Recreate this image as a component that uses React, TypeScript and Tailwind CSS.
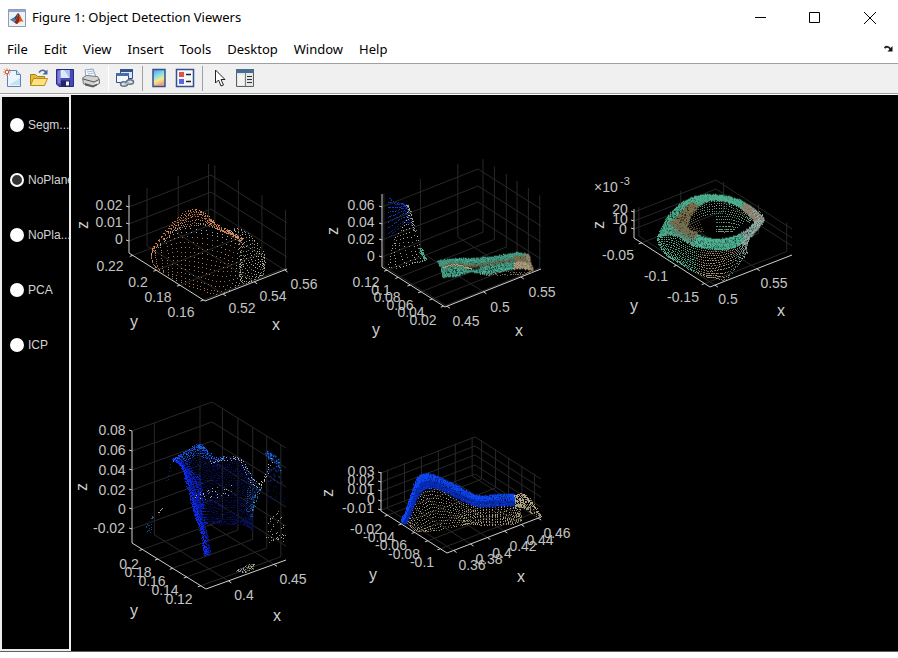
import React, { useState } from 'react';

type Pt = [number, number];

type Patch = {
  rows: Pt[][];
  nu: number;
  nv: number;
  dot?: number;
  jitter?: number;
  color: (u: number, v: number, r: number) => string;
};

type Label = { text: string; x: number; y: number };

type Plot = {
  name: string;
  view: string;
  left: Pt;
  front: Pt;
  right: Pt;
  top: number;
  xTicks: number[];
  yTicks: number[];
  zTicks: number[];
  labels: Label[];
  axes: { x: Pt; y: Pt; z: Pt };
  exponent?: Pt;
  cloudOrigin: Pt;
  cloud: Patch[];
};

// Small deterministic noise so every render draws the same points
const noise = (n: number) => {
  const s = Math.sin(n * 127.1 + 11.7) * 43758.5453;
  return s - Math.floor(s);
};

const spline = (p: Pt[], t: number): Pt => {
  if (p.length === 1) return p[0];
  const s = Math.min(t * (p.length - 1), p.length - 1.0001);
  const i = Math.floor(s);
  const f = s - i;
  const a = p[Math.max(i - 1, 0)];
  const b = p[i];
  const c = p[i + 1];
  const d = p[Math.min(i + 2, p.length - 1)];
  const mix = (k: 0 | 1) =>
    0.5 *
    (2 * b[k] +
      (c[k] - a[k]) * f +
      (2 * a[k] - 5 * b[k] + 4 * c[k] - d[k]) * f * f +
      (3 * b[k] - a[k] - 3 * c[k] + d[k]) * f * f * f);
  return [mix(0), mix(1)];
};

// Cloud units are a third of a pixel, so multiples of 3 keep the dots crisp
const snap = (n: number) => Math.round(n / 3) * 3;

const scatter = (patch: Patch) => {
  const groups: Record<string, string> = {};
  const j = patch.jitter ?? 2;
  for (let a = 0; a < patch.nv; a++) {
    for (let b = 0; b < patch.nu; b++) {
      const v = patch.nv === 1 ? 0 : a / (patch.nv - 1);
      const u = patch.nu === 1 ? 0 : b / (patch.nu - 1);
      const n = a * 311 + b * 7;
      const column = patch.rows.map(row => spline(row, u));
      const [x, y] = spline(column, v);
      const c = patch.color(u, v, noise(n + 3));
      if (c === 'none') continue;
      const px = snap(x + (noise(n) - 0.5) * j);
      const py = snap(y + (noise(n + 1) - 0.5) * j) + 1.5;
      groups[c] = (groups[c] ?? '') + `M${px} ${py}h${patch.dot ?? 3}`;
    }
  }
  return groups;
};

const list = (texts: string[], at: Pt[]): Label[] =>
  texts.map((text, i) => ({ text, x: at[i][0], y: at[i][1] }));

const plots: Plot[] = [
  {
    name: 'Segment 1',
    view: '75 150 250 200',
    left: [129, 253],
    front: [205, 301],
    right: [287, 269],
    top: 195,
    zTicks: [207, 224, 241],
    yTicks: [0.05, 0.36, 0.67, 0.98],
    xTicks: [0.22, 0.6, 0.97],
    labels: list(
      ['0.02', '0.01', '0', '0.22', '0.2', '0.18', '0.16', '0.52', '0.54', '0.56'],
      [[109, 205], [109, 222], [119, 239], [110, 266], [138, 282], [158, 297], [181, 312], [242, 308], [273, 296], [304, 284]],
    ),
    axes: { x: [276, 325], y: [134, 323], z: [84, 225] },
    cloudOrigin: [70, 150],
    cloud: [
      {
        rows: [
          [[246, 292], [280, 250], [312, 212], [345, 185], [380, 178], [410, 195], [440, 222], [475, 240]],
          [[246, 300], [285, 252], [325, 218], [355, 200], [385, 195], [410, 210], [440, 235], [480, 246]],
          [[246, 308], [290, 262], [320, 236], [350, 228], [385, 224], [420, 228], [460, 244], [510, 262]],
        ],
        nu: 36, nv: 8, jitter: 4,
        color: (u, v, r) => (v > 0.85 && r > 0.4 ? '#a59684' : r > 0.6 ? '#e08b56' : '#b96d42'),
      },
      {
        rows: [
          [[244, 310], [290, 258], [330, 236], [385, 238], [440, 248], [490, 266], [520, 280]],
          [[244, 322], [300, 300], [345, 296], [390, 300], [440, 308], [480, 322], [520, 334]],
          [[248, 340], [300, 348], [345, 352], [390, 360], [430, 370], [475, 372], [515, 370]],
          [[258, 352], [300, 380], [345, 402], [385, 415], [420, 428], [455, 430], [505, 404]],
        ],
        nu: 22, nv: 14, jitter: 1,
        color: (u, v, r) => (u > 0.88 ? '#a0967f' : v < 0.08 ? '#b4ada0' : r > 0.6 ? '#c98457' : '#a06a48'),
      },
      {
        rows: [
          [[468, 240], [500, 234], [530, 246], [556, 272], [578, 305], [583, 325]],
          [[480, 250], [505, 250], [535, 272], [555, 300], [573, 325], [583, 340]],
          [[500, 262], [520, 290], [536, 318], [550, 335], [568, 348], [582, 355]],
          [[508, 300], [512, 330], [516, 350], [530, 366], [550, 375], [578, 370]],
          [[508, 340], [508, 370], [512, 390], [522, 400], [545, 392], [570, 376]],
        ],
        nu: 15, nv: 15, jitter: 2,
        color: (u, v, r) => (r > 0.65 ? '#c4bba4' : r > 0.3 ? '#a19984' : '#7d7a69'),
      },
      {
        rows: [[[420, 205], [450, 232], [490, 250], [515, 266]], [[424, 212], [452, 240], [490, 258], [512, 272]]],
        nu: 22, nv: 3, jitter: 4,
        color: (u, v, r) => (r > 0.5 ? '#e38a52' : '#c87644'),
      },
    ],
  },
  {
    name: 'Segment 2',
    view: '325 150 250 200',
    left: [382, 267],
    front: [445, 307],
    right: [541, 269],
    top: 194,
    zTicks: [207, 224, 240, 257],
    yTicks: [0.08, 0.26, 0.45, 0.62, 0.8, 0.98],
    xTicks: [0.02, 0.4, 0.79],
    labels: list(
      ['0.06', '0.04', '0.02', '0', '0.12', '0.1', '0.08', '0.06', '0.04', '0.02', '0.45', '0.5', '0.55'],
      [[361, 205], [361, 222], [361, 239], [371, 256], [366, 282], [381, 290], [387, 297], [400, 305], [411, 312], [423, 320], [466, 321], [500, 307], [542, 292]],
    ),
    axes: { x: [519, 331], y: [376, 331], z: [334, 231] },
    cloudOrigin: [320, 150],
    cloud: [
      {
        rows: [
          [[207, 143], [225, 156], [246, 159], [262, 166]],
          [[203, 180], [225, 178], [252, 172], [270, 180]],
          [[205, 220], [230, 205], [258, 192], [277, 212]],
          [[205, 262], [232, 235], [262, 215], [284, 245]],
        ],
        nu: 20, nv: 9, jitter: 2,
        color: (u, v, r) => (u > 0.85 ? '#a9a48c' : v > 0.8 && r > 0.4 ? '#0f2a80' : r > 0.5 ? '#0f3ed0' : '#0a2590'),
      },
      {
        rows: [
          [[264, 170], [274, 190], [280, 220], [292, 262], [302, 298], [318, 328]],
          [[262, 190], [262, 225], [268, 260], [280, 300], [292, 325], [310, 332]],
          [[248, 225], [242, 260], [242, 290], [250, 320], [268, 340], [290, 336]],
          [[225, 262], [218, 285], [212, 305], [210, 330], [206, 350], [240, 352]],
        ],
        nu: 15, nv: 8, jitter: 2,
        color: (u, v, r) => (u > 0.75 && v < 0.35 ? '#48a08a' : r > 0.5 ? '#b8b29b' : '#8b8671'),
      },
      {
        rows: [[[298, 292], [303, 312], [318, 326]], [[304, 296], [312, 318], [312, 332]]],
        nu: 12, nv: 4, jitter: 4,
        color: () => '#4aa890',
      },
      {
        rows: [
          [[352, 332], [400, 327], [450, 326], [500, 322], [560, 313], [595, 309], [625, 314]],
          [[358, 342], [400, 338], [450, 340], [500, 334], [560, 326], [595, 320], [628, 330]],
          [[364, 360], [400, 350], [450, 356], [500, 350], [560, 342], [600, 334], [632, 346]],
          [[368, 379], [410, 376], [450, 362], [500, 371], [550, 360], [600, 352], [637, 360]],
        ],
        nu: 110, nv: 20, dot: 4, jitter: 4,
        color: (u, v, r) => {
          if (u > 0.93) return r > 0.5 ? '#938468' : '#474331';
          if (u > 0.76 && v > 0.22) return v > 0.65 ? (r > 0.5 ? '#9c8b6d' : '#c0ab89') : r > 0.5 ? '#54755c' : '#766b4b';
          if (v > 0.42 && v < 0.56 && u > 0.06) return r > 0.5 ? '#816f51' : '#4f6b50';
          if (v >= 0.55 && v < 0.7 && u > 0.3 && u < 0.42) return '#1d3328';
          return r > 0.75 ? '#55b99b' : r > 0.3 ? '#3f957f' : '#2c6e5b';
        },
      },
      {
        rows: [[[480, 372], [550, 364], [605, 368], [638, 360]], [[500, 375], [550, 372], [600, 372], [636, 364]]],
        nu: 28, nv: 2, jitter: 4,
        color: () => '#766c56',
      },
      {
        rows: [[[370, 350], [405, 343], [440, 352], [454, 355]]],
        nu: 40, nv: 1, jitter: 2,
        color: () => '#b79a78',
      },
    ],
  },
  {
    name: 'Segment 3',
    view: '575 150 250 200',
    left: [634, 238],
    front: [710, 287],
    right: [792, 255],
    top: 209,
    zTicks: [212, 221, 229],
    yTicks: [0.1, 0.56, 0.93],
    xTicks: [0.06, 0.57],
    labels: list(
      ['20', '10', '0', '-0.05', '-0.1', '-0.15', '0.5', '0.55'],
      [[620, 209], [620, 219], [623, 229], [618, 255], [656, 276], [683, 297], [728, 299], [774, 283]],
    ),
    axes: { x: [781, 311], y: [634, 307], z: [600, 225] },
    exponent: [594, 191],
    cloudOrigin: [580, 160],
    cloud: [
      // hollow inside the rim
      {
        rows: [
          [[320, 155], [360, 128], [420, 118], [480, 132], [516, 162]],
          [[320, 178], [362, 152], [420, 144], [475, 155], [512, 176]],
          [[325, 200], [370, 182], [415, 176], [462, 180], [500, 196]],
          [[345, 215], [380, 212], [415, 214], [440, 214], [470, 212]],
        ],
        nu: 34, nv: 13, jitter: 1,
        color: (u, v, r) => {
          if (v > 0.5 && (u < 0.45 || u > 0.9)) return u < 0.2 ? '#5f5138' : 'none';
          if (u < 0.25) return r > 0.5 ? '#7d6b49' : '#5a6b4c';
          return r > 0.6 ? '#62ab90' : r > 0.3 ? '#7f8a72' : '#3f7d67';
        },
      },
      // front wall
      {
        rows: [
          [[234, 222], [280, 216], [330, 244], [390, 258], [450, 252], [500, 228], [545, 182]],
          [[232, 240], [275, 245], [325, 270], [380, 283], [430, 280], [480, 262], [512, 226]],
          [[240, 262], [280, 280], [325, 300], [375, 318], [420, 314], [470, 292], [500, 258]],
          [[260, 288], [290, 304], [330, 328], [375, 348], [405, 352], [440, 354], [500, 278]],
        ],
        nu: 58, nv: 15, jitter: 1,
        color: (u, v, r) => {
          if (u > 0.8) return r > 0.5 ? '#8ca49c' : '#596e67';
          if (u > 0.42 && v > 0.2) return r > 0.5 ? '#ab9473' : '#74775d';
          return r > 0.6 ? '#58b89a' : '#439c81';
        },
      },
      // rim, far side then near side
      {
        rows: [
          [[234, 228], [258, 176], [300, 132], [350, 108], [420, 106], [480, 122], [525, 152], [548, 178]],
          [[262, 224], [284, 180], [318, 142], [358, 116], [420, 113], [475, 128], [515, 158], [538, 180]],
          [[318, 216], [322, 186], [338, 154], [370, 125], [420, 119], [470, 135], [507, 164], [526, 182]],
        ],
        nu: 105, nv: 20, dot: 4, jitter: 4,
        color: (u, v, r) => {
          if (u > 0.75) return r > 0.6 ? '#9b7c65' : r > 0.3 ? '#8ba39d' : '#588571';
          if (u < 0.36 && v > 0.45) return r > 0.5 ? '#7d6b4a' : r > 0.25 ? '#5d7a58' : '#453f2b';
          return r > 0.6 ? '#4fb08f' : '#3a8e72';
        },
      },
      {
        rows: [
          [[285, 178], [320, 205], [360, 228], [400, 238], [450, 232], [495, 212], [526, 184]],
          [[262, 192], [305, 218], [350, 240], [405, 250], [456, 246], [505, 224], [540, 188]],
          [[240, 215], [290, 226], [340, 254], [400, 265], [455, 262], [510, 228], [548, 178]],
        ],
        nu: 95, nv: 15, dot: 4, jitter: 4,
        color: (u, v, r) => {
          if (u > 0.78) return r > 0.5 ? '#8fa7a2' : '#66897d';
          if (v < 0.45 && u < 0.3) return r > 0.4 ? '#806b4c' : '#4a7d60';
          if (u > 0.1 && u < 0.3 && v < 0.8) return r > 0.6 ? '#6c8974' : '#51806c';
          return r > 0.65 ? '#52b494' : '#3c9378';
        },
      },
      {
        rows: [[[520, 145], [545, 165], [545, 190], [505, 230], [500, 250]], [[510, 160], [530, 175], [528, 200], [495, 235], [485, 250]]],
        nu: 34, nv: 8, jitter: 6,
        color: (u, v, r) => (r > 0.7 ? '#a4b2b0' : r > 0.3 ? '#7d9390' : '#5a6d65'),
      },
    ],
  },
  {
    name: 'Segment 4',
    view: '75 390 250 240',
    left: [132, 543],
    front: [206, 589],
    right: [286, 560],
    top: 431,
    zTicks: [431, 451, 470, 490, 509, 529],
    yTicks: [0.14, 0.35, 0.55, 0.74, 0.93],
    xTicks: [0.28, 0.85],
    labels: list(
      ['0.08', '0.06', '0.04', '0.02', '0', '-0.02', '0.2', '0.18', '0.16', '0.14', '0.12', '0.4', '0.45'],
      [[112, 430], [112, 450], [112, 470], [112, 490], [122, 509], [109, 528], [129, 564], [138, 572], [152, 581], [165, 590], [179, 599], [244, 595], [293, 579]],
    ),
    axes: { x: [277, 616], y: [134, 612], z: [83, 487] },
    cloudOrigin: [70, 390],
    cloud: [
      {
        rows: [
          [[308, 208], [345, 185], [385, 162], [410, 180], [435, 202], [490, 198], [525, 225], [562, 285]],
          [[330, 225], [355, 218], [385, 210], [420, 222], [450, 232], [495, 235], [530, 265], [555, 315]],
          [[350, 270], [375, 270], [400, 272], [430, 278], [460, 285], [500, 290], [530, 315], [548, 350]],
          [[372, 335], [395, 335], [415, 338], [440, 345], [470, 350], [500, 350], [525, 365], [546, 390]],
          [[390, 400], [410, 400], [430, 395], [450, 400], [480, 402], [500, 400], [525, 405], [545, 420]],
        ],
        nu: 60, nv: 34, jitter: 2,
        color: (u, v, r) => {
          if (v < 0.2 && u < 0.45) return r > 0.6 ? '#145ad8' : r > 0.3 ? '#0a39bd' : '#061d78';
          if (u > 0.86) return v < 0.75 && r > 0.6 ? '#1b4c86' : '#06104a';
          if (u < 0.16) return '#0920a6';
          return r > 0.7 ? '#04106a' : r > 0.3 ? '#030a4e' : '#010425';
        },
      },
      {
        rows: [
          [[308, 204], [335, 232], [350, 280], [364, 335], [376, 380], [392, 430], [402, 494]],
          [[322, 202], [350, 232], [368, 272], [384, 335], [396, 380], [410, 430], [418, 488]],
        ],
        nu: 100, nv: 10, jitter: 5,
        color: (u, v, r) => (v > 0.6 ? (r > 0.5 ? '#0a1ec2' : '#071385') : r > 0.5 ? '#0d2df0' : '#0b20c9'),
      },
      {
        rows: [
          [[350, 235], [362, 300], [378, 350]],
          [[388, 260], [395, 300], [400, 350]],
        ],
        nu: 18, nv: 14, jitter: 4,
        color: (u, v, r) => (r > 0.5 ? '#0a20c0' : '#061282'),
      },
      {
        rows: [[[308, 204], [345, 184], [382, 164], [398, 170], [434, 202], [462, 200]], [[312, 212], [345, 192], [382, 172], [398, 178], [430, 208], [462, 208]]],
        nu: 30, nv: 3, jitter: 5,
        color: (u, v, r) => (r > 0.6 ? '#2b78cc' : '#104ad0'),
      },
      {
        rows: [
          [[488, 196], [512, 206], [528, 230], [545, 262], [564, 280], [578, 272], [588, 245], [604, 204]],
          [[490, 202], [508, 214], [522, 240], [540, 272], [562, 290], [578, 276], [590, 250], [606, 206]],
        ],
        nu: 30, nv: 2, jitter: 5,
        color: (u, v, r) => (r > 0.4 ? '#c4bf9f' : '#87999e'),
      },
      {
        rows: [[[565, 290], [555, 325], [545, 358]], [[575, 290], [560, 318], [552, 352]]],
        nu: 14, nv: 2, jitter: 6,
        color: (u, v, r) => (r > 0.5 ? '#3f8fc0' : '#205d97'),
      },
      {
        rows: [[[420, 212], [450, 208], [482, 200]], [[424, 218], [450, 214], [486, 206]]],
        nu: 9, nv: 2, jitter: 7,
        color: () => '#aaa68b',
      },
      {
        rows: [[[388, 304], [415, 298], [440, 296], [484, 290]], [[378, 320], [410, 324], [438, 320], [474, 312]]],
        nu: 10, nv: 3, jitter: 12,
        color: (u, v, r) => (r > 0.3 ? '#b3b199' : '#6d6f78'),
      },
      {
        rows: [[[588, 182], [606, 194], [622, 208]], [[592, 200], [606, 210], [626, 240]]],
        nu: 9, nv: 4, dot: 4, jitter: 8,
        color: (u, v, r) => (r > 0.5 ? '#1553e0' : '#1c6fd0'),
      },
      {
        rows: [[[594, 235], [610, 232], [626, 240]], [[592, 320], [612, 326], [640, 332]]],
        nu: 6, nv: 8, dot: 4, jitter: 8,
        color: (u, v) => (v < 0.5 ? '#0a2583' : '#060f45'),
      },
      {
        rows: [[[622, 362], [605, 380], [596, 395]], [[640, 385], [615, 415], [590, 432]], [[642, 425], [620, 440], [590, 455]], [[642, 450], [630, 440], [614, 450]]],
        nu: 9, nv: 5, jitter: 8,
        color: (u, v, r) => (r > 0.5 ? '#b3ae91' : '#868168'),
      },
      { rows: [[[230, 402], [240, 400]], [[232, 422], [238, 426]]], nu: 3, nv: 5, jitter: 8, color: () => '#154a8c' },
      { rows: [[[262, 366], [275, 354]], [[245, 384], [248, 380]]], nu: 5, nv: 2, jitter: 3, color: (u, v) => (v ? '#345a80' : '#aaa58a') },
      { rows: [[[300, 222], [290, 272]]], nu: 6, nv: 1, jitter: 4, color: () => '#082a86' },
      {
        rows: [[[512, 534], [530, 526], [550, 522]], [[500, 542], [525, 545], [548, 534]]],
        nu: 14, nv: 5, jitter: 4,
        color: (u, v, r) => (u < 0.3 && v < 0.5 ? '#33409a' : r > 0.5 ? '#a6a189' : '#5f5d52'),
      },
    ],
  },
  {
    name: 'Segment 5',
    view: '325 390 250 240',
    left: [381, 511],
    front: [447, 553],
    right: [541, 517],
    top: 472,
    zTicks: [473, 482, 491, 501, 510],
    yTicks: [0.1, 0.31, 0.51, 0.71, 0.9],
    xTicks: [0.07, 0.25, 0.43, 0.61, 0.79, 0.97],
    labels: list(
      ['0.03', '0.02', '0.01', '0', '-0.01', '-0.02', '-0.04', '-0.06', '-0.08', '-0.1', '0.36', '0.38', '0.4', '0.42', '0.44', '0.46'],
      [[361, 471], [361, 480], [361, 489], [371, 499], [358, 508], [366, 529], [379, 537], [391, 545], [404, 554], [422, 562], [472, 565], [489, 559], [502, 553], [523, 546], [540, 540], [557, 533]],
    ),
    axes: { x: [521, 577], y: [373, 576], z: [329, 493] },
    cloudOrigin: [320, 430],
    cloud: [
      {
        rows: [
          [[258, 278], [280, 215], [305, 172], [350, 172], [395, 190], [440, 212], [480, 222], [530, 222], [582, 225], [602, 222]],
          [[268, 285], [292, 240], [320, 212], [355, 212], [400, 225], [440, 238], [480, 244], [530, 245], [575, 250], [600, 245]],
          [[280, 298], [305, 275], [335, 255], [370, 255], [410, 258], [440, 262], [480, 264], [530, 264], [570, 268], [602, 258]],
          [[296, 304], [320, 303], [345, 300], [385, 292], [430, 284], [450, 280], [485, 284], [530, 284], [575, 282], [602, 270]],
        ],
        nu: 52, nv: 15, jitter: 2,
        color: (u, v, r) => (r > 0.6 ? '#b0a383' : r > 0.25 ? '#8a7f65' : '#5a5342'),
      },
      {
        rows: [
          [[243, 272], [262, 225], [285, 156], [308, 133], [345, 137], [400, 162], [445, 187], [480, 198], [530, 193], [580, 193]],
          [[250, 276], [270, 230], [292, 168], [315, 152], [348, 156], [396, 178], [442, 202], [480, 212], [530, 210], [582, 212]],
          [[256, 280], [274, 238], [298, 188], [320, 172], [350, 174], [393, 194], [440, 216], [480, 228], [530, 226], [580, 224]],
        ],
        nu: 130, nv: 14, dot: 4, jitter: 4,
        color: (u, v, r) => (v < 0.5 ? (r > 0.5 ? '#0c49f5' : '#0a3bdd') : r > 0.5 ? '#0735d8' : '#0629b0'),
      },
      {
        rows: [
          [[584, 193], [605, 190], [622, 200], [640, 222], [662, 258]],
          [[586, 208], [600, 208], [615, 214], [634, 232], [656, 258]],
          [[586, 226], [598, 226], [612, 232], [622, 238], [634, 250]],
        ],
        nu: 26, nv: 12, jitter: 4,
        color: (u, v, r) => (u > 0.55 && v > 0.4 && r > 0.4 ? 'none' : r > 0.5 ? '#b8ad8a' : '#958b70'),
      },
    ],
  },
];

const add = (p: Pt, a: Pt, b: Pt): Pt => [p[0] + a[0] - b[0], p[1] + a[1] - b[1]];
const lerp = (a: Pt, b: Pt, t: number): Pt => [a[0] + (b[0] - a[0]) * t, a[1] + (b[1] - a[1]) * t];
const seg = (...p: Pt[]) => p.map((q, i) => `${i ? 'L' : 'M'}${q[0]} ${q[1]}`).join('');

const ScatterPlot: React.FC<{ plot: Plot }> = ({ plot }) => {
  const { left, front, right, top } = plot;
  const back = add(left, right, front);
  const height = left[1] - top;

  let grid = '';
  let ticks = '';
  plot.zTicks.forEach(y => {
    const dy = left[1] - y;
    grid += seg([left[0], y], [back[0], back[1] - dy], [right[0], right[1] - dy]);
    ticks += seg([left[0] - 3, y - 1], [left[0], y]);
  });
  plot.yTicks.forEach(t => {
    const p = lerp(left, front, t);
    const q = add(p, right, front);
    grid += seg(p, q, [q[0], q[1] - height]);
    ticks += seg(p, [p[0] - 3, p[1] + 1]);
  });
  plot.xTicks.forEach(t => {
    const p = lerp(front, right, t);
    const q = add(p, left, front);
    grid += seg(p, q, [q[0], q[1] - height]);
    ticks += seg(p, [p[0] + 3, p[1] + 2]);
  });

  const { x, y, z } = plot.axes;

  return (
    <svg viewBox={plot.view} className="block w-full overflow-visible" role="img" aria-label={plot.name} fontFamily='"Liberation Sans", Arial, sans-serif'>
      <path d={grid} fill="none" stroke="#282828" />
      <path d={seg([left[0], top], left, front, right) + ticks} fill="none" stroke="#cfcfcf" />
      <g transform={`translate(${plot.cloudOrigin[0]} ${plot.cloudOrigin[1]}) scale(${1 / 3})`} fill="none">
        {plot.cloud.map((patch, i) =>
          Object.entries(scatter(patch)).map(([color, d]) => (
            <path key={`${i}${color}`} d={d} stroke={color} strokeWidth={patch.dot ?? 3} />
          )),
        )}
      </g>
      <g fill="#c4c4c4" fontSize="14" textAnchor="middle">
        {plot.labels.map(l => (
          <text key={`${l.text}-${l.x}`} x={l.x} y={l.y + 5}>{l.text}</text>
        ))}
      </g>
      {plot.exponent && (
        <g fill="#c4c4c4">
          <text x={plot.exponent[0]} y={plot.exponent[1] + 1} fontSize="14">×10</text>
          <text x={plot.exponent[0] + 26} y={plot.exponent[1] - 6} fontSize="11">-3</text>
        </g>
      )}
      <g fill="#d0d0d0" fontSize="16" textAnchor="middle">
        <text x={x[0]} y={x[1] + 5}>x</text>
        <text x={y[0]} y={y[1] + 4}>y</text>
        <text transform={`translate(${z[0] + 4} ${z[1]}) rotate(-90)`}>z</text>
      </g>
    </svg>
  );
};

const NewIcon = () => (
  <svg width="20" height="20" viewBox="0 0 20 20">
    <path d="M4.5 2.5h9l4 4v12h-13z" fill="#eaf5ff" stroke="#5d82b4" />
    <path d="M13.5 2.5v4h4" fill="#c9dff2" stroke="#5d82b4" />
    <path d="M6 17h11v-7z" fill="#c5e1f6" />
    <path d="M1 1l6 6M7 1L1 7M4 0v8M0 4h8" stroke="#e89a68" />
    <circle cx="4" cy="4" r="1.8" fill="#fff" stroke="#c9502a" />
  </svg>
);

const OpenIcon = () => (
  <svg width="20" height="20" viewBox="0 0 20 20">
    <path d="M1.5 17V6.5h5l2 2h7V17z" fill="#e7b83a" stroke="#a9801f" />
    <path d="M1.5 17.5l3-7h14l-3 7z" fill="#ffe27a" stroke="#b88c25" />
    <path d="M10 4.5c2-3 5-3 7-.5" fill="none" stroke="#49688f" strokeWidth="1.5" />
    <path d="M18.5 1.5v5h-5z" fill="#49688f" />
  </svg>
);

const SaveIcon = () => (
  <svg width="20" height="20" viewBox="0 0 20 20">
    <path d="M1.5 1.5h17v17H4l-2.5-2.5z" fill="#4848b8" stroke="#28287c" />
    <path d="M2.5 2.5h3v13h-3z" fill="#7c80dc" />
    <path d="M5.5 2h9v8h-9z" fill="#dce9fa" />
    <path d="M9 2h5.5v8z" fill="#a8c4ec" />
    <path d="M6 12.5h9v6H6z" fill="#25255f" />
    <path d="M11 13.5h3v4h-3z" fill="#f4f4ff" />
  </svg>
);

const PrintIcon = () => (
  <svg width="20" height="20" viewBox="0 0 20 20">
    <path d="M5 9L4 2l8-1 3 8z" fill="#f8fbff" stroke="#8fa2bd" />
    <path d="M6 4l6-1M7 6l6-1" stroke="#9ebbe0" />
    <path d="M1.5 10l4-2.5 11 1 2 3v4l-6 3-10-2.5z" fill="#d2d2d2" stroke="#777" />
    <path d="M2 11l11 3 5-2.5" fill="none" stroke="#555" />
    <path d="M4 15l8 2.5 4-2v2l-4 2-8-2z" fill="#5c5c5c" />
    <path d="M14 15.5l3-1" stroke="#fff" />
  </svg>
);

const LinkIcon = () => (
  <svg width="20" height="20" viewBox="0 0 20 20">
    <path d="M5.5 1.5h12v9h-12z" fill="#d9e6f7" stroke="#33528c" />
    <path d="M5 1h13v3H5z" fill="#33528c" />
    <path d="M1.5 5.5h12v9h-12z" fill="#f3f7fc" stroke="#33528c" />
    <path d="M1 5h13v3H1z" fill="#486ca8" />
    <g fill="#dde5ec" strokeLinecap="round">
      <ellipse cx="9" cy="16" rx="3.5" ry="2.3" stroke="#5f7184" strokeWidth="1.5" />
      <ellipse cx="15" cy="14" rx="3.5" ry="2.3" stroke="#5f7184" strokeWidth="1.5" />
      <path d="M10 16l4-1.5" stroke="#a9bccd" strokeWidth="1.5" />
    </g>
  </svg>
);

const ColorbarIcon = () => (
  <svg width="20" height="20" viewBox="0 0 20 20">
    <defs>
      <linearGradient id="bar" x1="0" y1="0" x2="0.3" y2="1">
        <stop offset="0" stopColor="#6f8be8" />
        <stop offset="0.4" stopColor="#7fdcf0" />
        <stop offset="0.7" stopColor="#f3ea8c" />
        <stop offset="1" stopColor="#f0a080" />
      </linearGradient>
    </defs>
    <path d="M4 1.5h12v17H4z" fill="url(#bar)" stroke="#33528c" strokeWidth="1.5" />
  </svg>
);

const LegendIcon = () => (
  <svg width="20" height="20" viewBox="0 0 20 20">
    <path d="M1.5 1.5h17v17h-17z" fill="#f7f9fd" stroke="#33528c" strokeWidth="1.5" />
    <path d="M4 4h5v5H4z" fill="#e0524c" />
    <path d="M4 11h5v5H4z" fill="#5a66e8" />
    <path d="M11 6.5h5M11 13.5h5" stroke="#222" strokeWidth="1.5" />
  </svg>
);

const PointerIcon = () => (
  <svg width="20" height="20" viewBox="0 0 20 20">
    <path d="M6.5 2v13l3-3 2.500 6 2.500-1-2.500-5.500h4z" fill="#fff" stroke="#222" />
  </svg>
);

const InspectorIcon = () => (
  <svg width="20" height="20" viewBox="0 0 20 20">
    <path d="M1.5 1.5h17v17h-17z" fill="#e6e6e2" stroke="#55626e" />
    <path d="M1 1h18v4H1z" fill="#4a6d94" />
    <path d="M3 7h6v10H3z" fill="#f4f4f0" />
    <path d="M10.5 5v13" stroke="#75808a" />
    <path d="M12 8.5h5M12 11.5h5M12 14.5h5" stroke="#333" />
  </svg>
);

const toolGroups = [
  [
    { label: 'New Figure', Icon: NewIcon },
    { label: 'Open File', Icon: OpenIcon },
    { label: 'Save Figure', Icon: SaveIcon },
    { label: 'Print Figure', Icon: PrintIcon },
  ],
  [{ label: 'Link Plot', Icon: LinkIcon }],
  [
    { label: 'Insert Colorbar', Icon: ColorbarIcon },
    { label: 'Insert Legend', Icon: LegendIcon },
  ],
  [
    { label: 'Edit Plot', Icon: PointerIcon },
    { label: 'Open Property Inspector', Icon: InspectorIcon },
  ],
];

const menus = ['File', 'Edit', 'View', 'Insert', 'Tools', 'Desktop', 'Window', 'Help'];

const modes = [
  { id: 'segment', label: 'Segm...' },
  { id: 'noplane', label: 'NoPlane' },
  { id: 'noplane-2', label: 'NoPla...' },
  { id: 'pca', label: 'PCA' },
  { id: 'icp', label: 'ICP' },
];

const TitleBar = () => (
  <header className="flex h-[35px] items-center bg-white pl-2">
    <svg width="18" height="18" viewBox="0 0 18 18" aria-hidden="true">
      <path d="M.5.5h17v17H.5z" fill="#eef1f5" stroke="#8c9db3" />
      <path d="M1 1h16v2H1z" fill="#8da9cc" />
      <path d="M2 10.5l4-2 2 2-2.5 2.5z" fill="#3f7cb8" />
      <path d="M6 8.5c2-1 3-4.500 4.500-4.500L8 11z" fill="#26476f" />
      <path d="M10.5 4c1.500 1.500 3 6 5 9-1.500-.5-2-1-3-.5-1.500.5-2.500 2.500-4 2.500L6 13c2-1 3.500-5 4.500-9z" fill="#d9541e" />
      <path d="M10.5 4c1 2.500 1 5 .5 8-1 1-1.500 2.500-2.500 3L6 13c2-1 3.500-5 4.500-9z" fill="#8e2516" />
    </svg>
    <h1 className="ml-1.5 flex-1 text-[13px]">Figure 1: Object Detection Viewers</h1>
    <div className="flex">
      <button aria-label="Minimize" className="flex h-8 w-[54px] items-center justify-center">
        <svg width="12" height="12" viewBox="0 0 12 12"><path d="M0 5.500h11" stroke="#000" /></svg>
      </button>
      <button aria-label="Maximize" className="flex h-8 w-[54px] items-center justify-center">
        <svg width="12" height="12" viewBox="0 0 12 12"><path d="M.5.5h10v10H.5z" fill="none" stroke="#000" /></svg>
      </button>
      <button aria-label="Close" className="flex h-8 w-[56px] items-center justify-center">
        <svg width="12" height="12" viewBox="0 0 12 12"><path d="M0 0l12 12M12 0L0 12" stroke="#000" /></svg>
      </button>
    </div>
  </header>
);

const MenuBar = () => (
  <nav className="flex h-[29px] items-center border-b border-[#a0a0a0] bg-white pr-1 pl-[7px]">
    <div className="flex flex-1 gap-4">
      {menus.map(m => (
        <button key={m} className="text-[13px] leading-5">{m}</button>
      ))}
    </div>
    <button aria-label="Dock Figure">
      <svg width="10" height="8" viewBox="0 0 10 8">
        <path d="M.5 3c2-2 4-1.500 6 1" fill="none" stroke="#222" strokeWidth="1.800" />
        <path d="M8.500 1v5.500H3.500z" fill="#111" />
      </svg>
    </button>
  </nav>
);

const Toolbar = () => (
  <div role="toolbar" className="flex h-[30px] items-center border-b border-[#a0a0a0] bg-[#f0f0f0]">
    {toolGroups.map((group, g) => (
      <React.Fragment key={group[0].label}>
        {g > 0 && (
          <div className="flex h-full w-2 justify-center py-0.5">
            <div className={`w-px ${g === 1 ? 'bg-white' : 'bg-[#a0a0a0]'}`} />
          </div>
        )}
        {group.map(({ label, Icon }) => (
          <button key={label} aria-label={label} className="flex h-7 w-[26px] items-start justify-center pt-[3px]">
            <Icon />
          </button>
        ))}
      </React.Fragment>
    ))}
  </div>
);

const App: React.FC = () => {
  const [mode, setMode] = useState('noplane');

  return (
    <div className='flex min-h-screen flex-col bg-white pb-1.5 font-["Noto_Sans",sans-serif] text-black'>
      <TitleBar />
      <MenuBar />
      <Toolbar />

      <main className="mt-px flex flex-1 border-b border-[#606060] bg-black">
        <fieldset className='w-[71px] min-w-0 shrink-0 overflow-hidden border-2 border-[#ececec] pt-[18px] pl-2 font-["Liberation_Sans",Arial,sans-serif]'>
          <legend className="sr-only">Viewer</legend>
          <div className="flex flex-col gap-[35px]">
            {modes.map(m => (
              <label key={m.id} className="flex h-5 items-center gap-1 text-xs whitespace-nowrap text-[#d4d4d4]">
                <input
                  type="radio"
                  name="mode"
                  checked={mode === m.id}
                  onChange={() => setMode(m.id)}
                  className="size-3.5 shrink-0 appearance-none rounded-full border-2 border-white bg-white checked:bg-[#333333]"
                />
                {m.label}
              </label>
            ))}
          </div>
        </fieldset>

        <section className="min-w-0 flex-1 pt-[55px] pl-1">
          <div className="grid max-w-[750px] grid-cols-3 gap-y-10">
            {plots.map(plot => (
              <ScatterPlot key={plot.name} plot={plot} />
            ))}
          </div>
        </section>
      </main>
    </div>
  );
};

export default App;
